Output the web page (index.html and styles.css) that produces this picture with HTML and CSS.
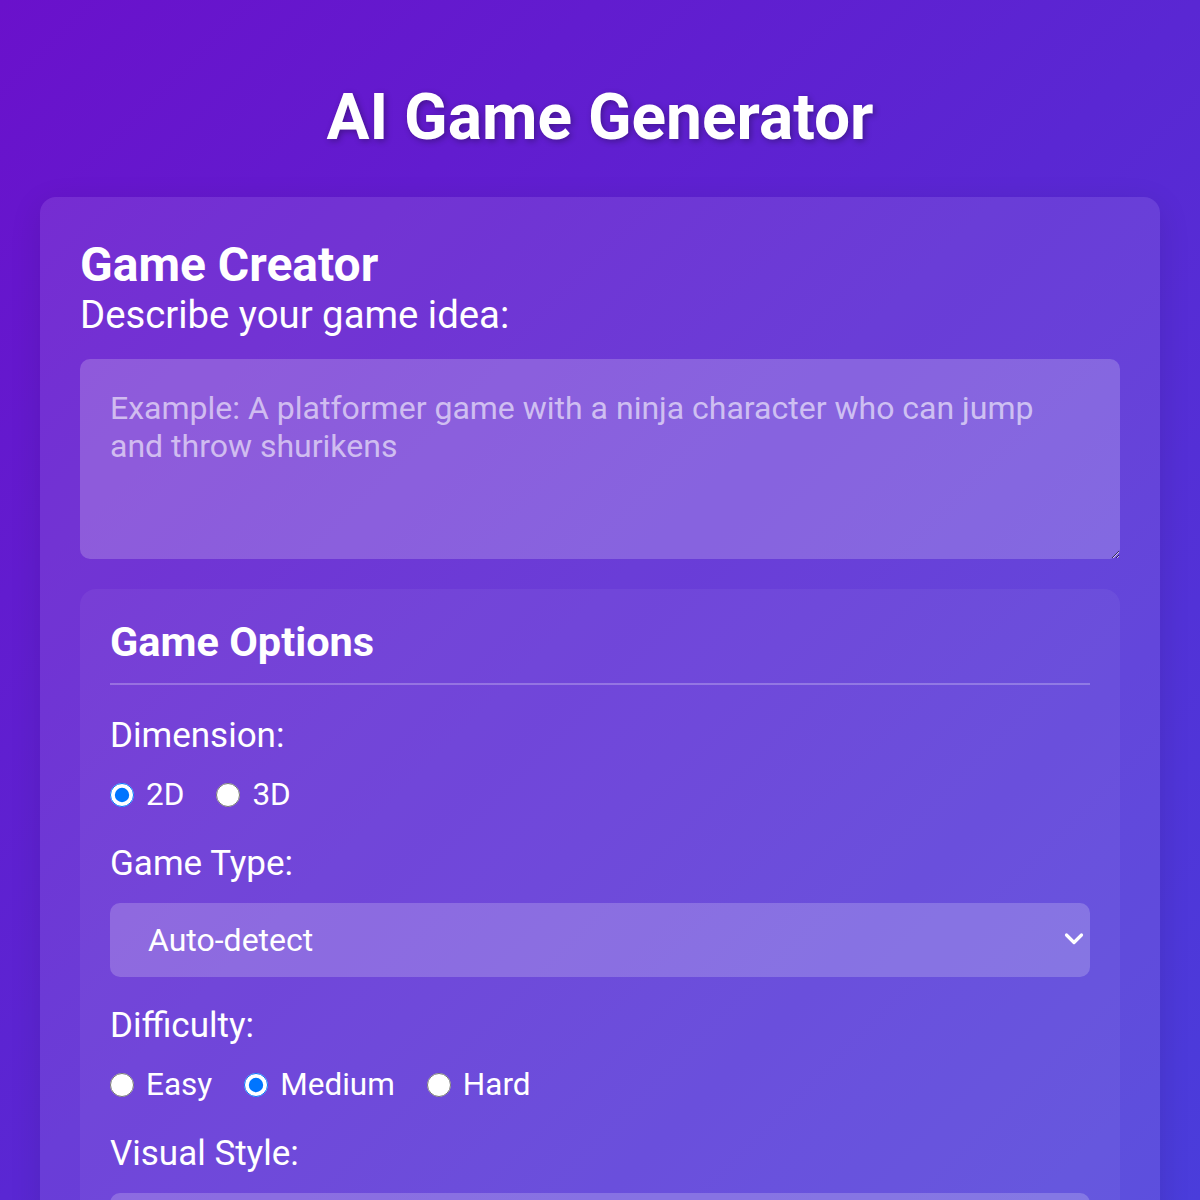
FILE: index.html
```html
<!DOCTYPE html>
<html lang="en">
<head>
  <meta charset="UTF-8">
  <meta name="viewport" content="width=device-width, initial-scale=1.0">
  <title>AI Game Generator</title>
  <link rel="stylesheet" href="styles.css">
</head>
<body>
  <h1>AI Game Generator</h1>
  <div class="container">
    <h2>Game Creator</h2>
    <label class="prompt-label" for="prompt">Describe your game idea:</label>
    <textarea id="prompt" placeholder="Example: A platformer game with a ninja character who can jump and throw shurikens"></textarea>

    <div class="options">
      <h3>Game Options</h3>

      <div class="option-group">
        <label class="option-label">Dimension:</label>
        <div class="radio-row">
          <label class="radio"><input type="radio" name="dimension" value="2d" checked> 2D</label>
          <label class="radio"><input type="radio" name="dimension" value="3d"> 3D</label>
        </div>
      </div>

      <div class="option-group">
        <label class="option-label" for="type">Game Type:</label>
        <div class="select-wrap">
          <select id="type">
            <option>Auto-detect</option>
            <option>Platformer</option>
            <option>Shooter</option>
            <option>Puzzle</option>
            <option>Racing</option>
          </select>
          <svg class="chevron" width="20" height="20" viewBox="0 0 20 20"><path d="M2.5 6l7.5 7.5 7.5-7.5" fill="none" stroke="#fff" stroke-width="3.2" stroke-linecap="round" stroke-linejoin="round"/></svg>
        </div>
      </div>

      <div class="option-group">
        <label class="option-label">Difficulty:</label>
        <div class="radio-row">
          <label class="radio"><input type="radio" name="difficulty" value="easy"> Easy</label>
          <label class="radio"><input type="radio" name="difficulty" value="medium" checked> Medium</label>
          <label class="radio"><input type="radio" name="difficulty" value="hard"> Hard</label>
        </div>
      </div>

      <div class="option-group">
        <label class="option-label" for="style">Visual Style:</label>
        <div class="select-wrap">
          <select id="style">
            <option>Auto-detect</option>
            <option>Pixel Art</option>
            <option>Cartoon</option>
            <option>Realistic</option>
          </select>
          <svg class="chevron" width="20" height="20" viewBox="0 0 20 20"><path d="M2.5 6l7.5 7.5 7.5-7.5" fill="none" stroke="#fff" stroke-width="3.2" stroke-linecap="round" stroke-linejoin="round"/></svg>
        </div>
      </div>
    </div>
  </div>
</body>
</html>
```

FILE: styles.css
```css
* {
  margin: 0;
  padding: 0;
  box-sizing: border-box;
}

body {
  font-family: Roboto, 'Noto Sans', sans-serif;
  background: linear-gradient(135deg, #6a11cb 0%, #4a3ddb 100%) fixed;
  color: #fff;
  padding: 40px;
  min-height: 100vh;
}

h1 {
  text-align: center;
  font-size: 64px;
  font-weight: 700;
  line-height: 1.2;
  margin: 40px 0;
  text-shadow: 2px 2px 6px rgba(0, 0, 0, 0.3);
}

.container {
  background: rgba(255, 255, 255, 0.1);
  border-radius: 16px;
  padding: 40px;
  box-shadow: 0 8px 32px rgba(0, 0, 0, 0.1);
}

h2 {
  font-size: 48px;
  font-weight: 700;
  line-height: 56px;
}

.prompt-label {
  display: block;
  font-size: 38.3px;
  line-height: 44px;
  margin-bottom: 22px;
}

textarea {
  display: block;
  width: 100%;
  height: 200px;
  padding: 30px;
  border: none;
  border-radius: 10px;
  background: rgba(255, 255, 255, 0.2);
  color: #fff;
  font-family: Roboto, 'Noto Sans', sans-serif;
  font-size: 32px;
  line-height: 38px;
  outline: none;
}

textarea::placeholder {
  color: rgba(255, 255, 255, 0.6);
}

.options {
  margin-top: 30px;
  background: rgba(255, 255, 255, 0.05);
  border-radius: 16px;
  padding: 30px;
}

h3 {
  font-size: 41.5px;
  font-weight: 700;
  line-height: 46px;
  padding-bottom: 18px;
  border-bottom: 2px solid rgba(255, 255, 255, 0.25);
  margin-bottom: 32px;
}

.option-group {
  margin-bottom: 30px;
}

.option-label {
  display: block;
  font-size: 35px;
  line-height: 38px;
  margin-bottom: 20px;
}

.radio-row {
  display: flex;
  align-items: center;
  gap: 32px;
  height: 40px;
}

.radio {
  display: flex;
  align-items: center;
  gap: 12px;
  font-size: 31.5px;
  cursor: pointer;
}

.radio input {
  width: 24px;
  height: 24px;
  margin: 0;
  accent-color: #0075ff;
}

.select-wrap {
  position: relative;
}

select {
  appearance: none;
  -webkit-appearance: none;
  display: block;
  width: 100%;
  height: 74px;
  padding: 0 38px;
  border: none;
  border-radius: 10px;
  background: rgba(255, 255, 255, 0.2);
  color: #fff;
  font-family: Roboto, 'Noto Sans', sans-serif;
  font-size: 32px;
  outline: none;
}

select option {
  color: #333;
}

.chevron {
  position: absolute;
  right: 6px;
  top: 26px;
  pointer-events: none;
}
```
